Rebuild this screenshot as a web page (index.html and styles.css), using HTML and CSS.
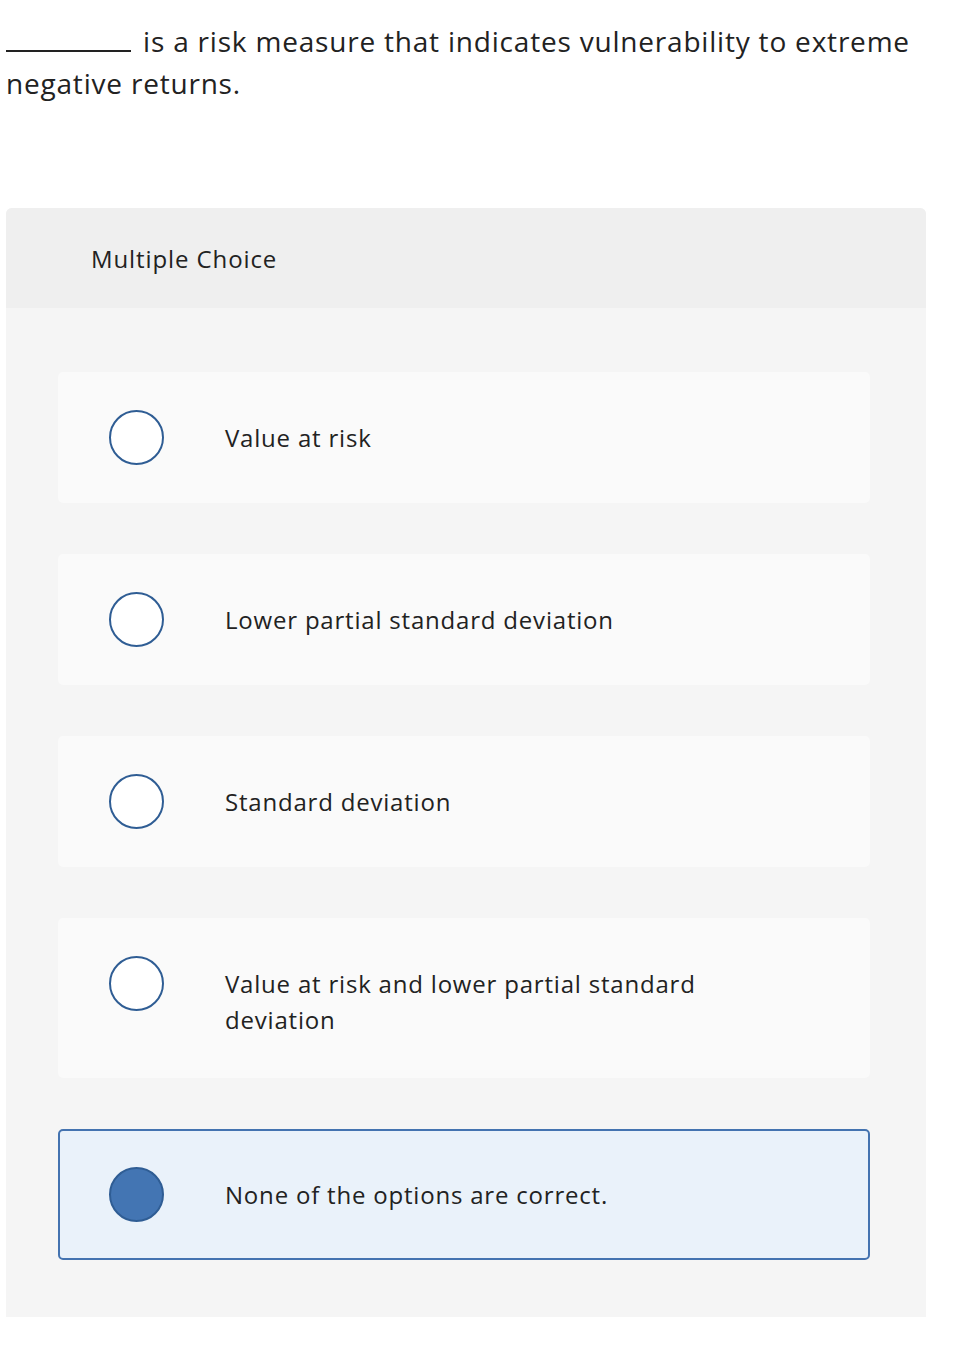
FILE: index.html
```html
<!DOCTYPE html>
<html lang="en">
<head>
  <meta charset="UTF-8">
  <title>Multiple Choice</title>
  <link rel="stylesheet" href="styles.css">
</head>
<body>
  <p class="question"><span class="blank"></span> is a risk measure that indicates vulnerability to extreme negative returns.</p>

  <div class="panel">
    <div class="panel-head">Multiple Choice</div>
    <div class="panel-body">
      <div class="option">
        <span class="radio"></span>
        <span class="label">Value at risk</span>
      </div>
      <div class="option">
        <span class="radio"></span>
        <span class="label">Lower partial standard deviation</span>
      </div>
      <div class="option">
        <span class="radio"></span>
        <span class="label">Standard deviation</span>
      </div>
      <div class="option">
        <span class="radio"></span>
        <span class="label">Value at risk and lower partial standard deviation</span>
      </div>
      <div class="option selected">
        <span class="radio"></span>
        <span class="label">None of the options are correct.</span>
      </div>
    </div>
  </div>
</body>
</html>
```

FILE: styles.css
```css
html, body {
  margin: 0;
  padding: 0;
}
body {
  background: #fff;
  color: #222;
  font-family: "Open Sans", Lato, sans-serif;
  padding: 0 6px;
}

.question {
  margin: 20px 0 0 0;
  font-size: 28px;
  line-height: 42px;
  letter-spacing: 0.8px;
  max-width: 920px;
}
.blank {
  display: inline-block;
  width: 125px;
  border-bottom: 2px solid #222;
  vertical-align: baseline;
  margin-right: 4px;
}

.panel {
  width: 920px;
  margin-top: 104px;
  background: #f5f5f5;
  border-radius: 6px 6px 0 0;
}
.panel-head {
  height: 100px;
  background: #efefef;
  border-radius: 6px 6px 0 0;
  padding-left: 85px;
  display: flex;
  align-items: center;
  font-size: 24px;
  letter-spacing: 0.9px;
}
.panel-body {
  padding: 64px 56px 57px 52px;
  display: flex;
  flex-direction: column;
  gap: 51px;
}

.option {
  display: flex;
  align-items: flex-start;
  padding: 36px 0 36px 49px;
  background: #fafafa;
  border: 2px solid transparent;
  border-radius: 5px;
}
.option.selected {
  background: #eaf2fa;
  border-color: #4473b0;
}
.radio {
  flex: none;
  width: 51px;
  height: 51px;
  border: 2px solid #2f5d94;
  border-radius: 50%;
  background: #fff;
}
.selected .radio {
  background: #4375b3;
}
.label {
  margin: 10px 0 0 61px;
  padding-bottom: 2px;
  font-size: 24px;
  line-height: 36px;
  letter-spacing: 0.8px;
  max-width: 520px;
}
```
